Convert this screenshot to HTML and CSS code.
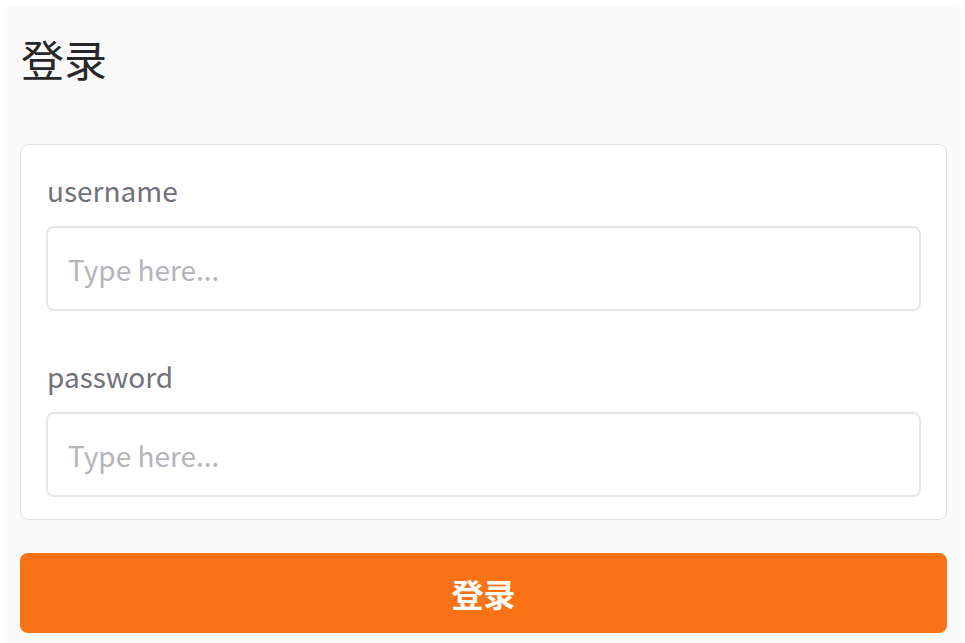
FILE: index.html
```html
<!DOCTYPE html>
<html lang="zh">
<head>
    <meta charset="UTF-8">
    <meta name="viewport" content="width=device-width, initial-scale=1.0">
    <title>登录</title>
    <link rel="stylesheet" href="styles.css">
</head>
<body>
    <div class="panel">
        <h1 class="title">登录</h1>

        <form class="login-form" onsubmit="return false;">
            <div class="fields">
                <label class="field">
                    <span class="field-label">username</span>
                    <input type="text" class="field-input" placeholder="Type here...">
                </label>
                <label class="field">
                    <span class="field-label">password</span>
                    <input type="password" class="field-input" placeholder="Type here...">
                </label>
            </div>
            <button type="submit" class="submit-btn">登录</button>
        </form>
    </div>
</body>
</html>
```

FILE: styles.css
```css
body {
    margin: 0;
    background: #ffffff;
    font-family: "Noto Sans CJK SC", "Noto Sans", sans-serif;
}
.panel {
    margin: 6px 3px 0 4px;
    padding: 16px 15px 16px 16px;
    background: #fafafa;
    border-radius: 8px;
    min-height: 640px;
    box-sizing: border-box;
}
.title {
    margin: 0 0 50px 1px;
    font-size: 43px;
    line-height: 72px;
    font-weight: 400;
    color: #27272a;
}
.login-form {
    display: flex;
    flex-direction: column;
    gap: 33px;
}
.fields {
    display: flex;
    flex-direction: column;
    gap: 46px;
    padding: 26px 25px 22px;
    background: #ffffff;
    border: 1px solid #e4e4e7;
    border-radius: 8px;
}
.field {
    display: flex;
    flex-direction: column;
    gap: 17px;
}
.field-label {
    font-size: 28px;
    line-height: 38px;
    color: #71717a;
    padding-left: 1px;
}
.field-input {
    height: 85px;
    flex-shrink: 0;
    box-sizing: border-box;
    padding: 0 20px;
    border: 2px solid #e5e7eb;
    border-radius: 8px;
    background: #ffffff;
    font-family: inherit;
    font-size: 28px;
    color: #27272a;
    outline: none;
}
.field-input::placeholder { color: #b4b4bb; }
.submit-btn {
    height: 80px;
    border: none;
    border-radius: 8px;
    background: #f97316;
    color: #ffffff;
    font-family: inherit;
    font-size: 32px;
    font-weight: 700;
    cursor: pointer;
}
.submit-btn:hover { background: #ea580c; }
```
